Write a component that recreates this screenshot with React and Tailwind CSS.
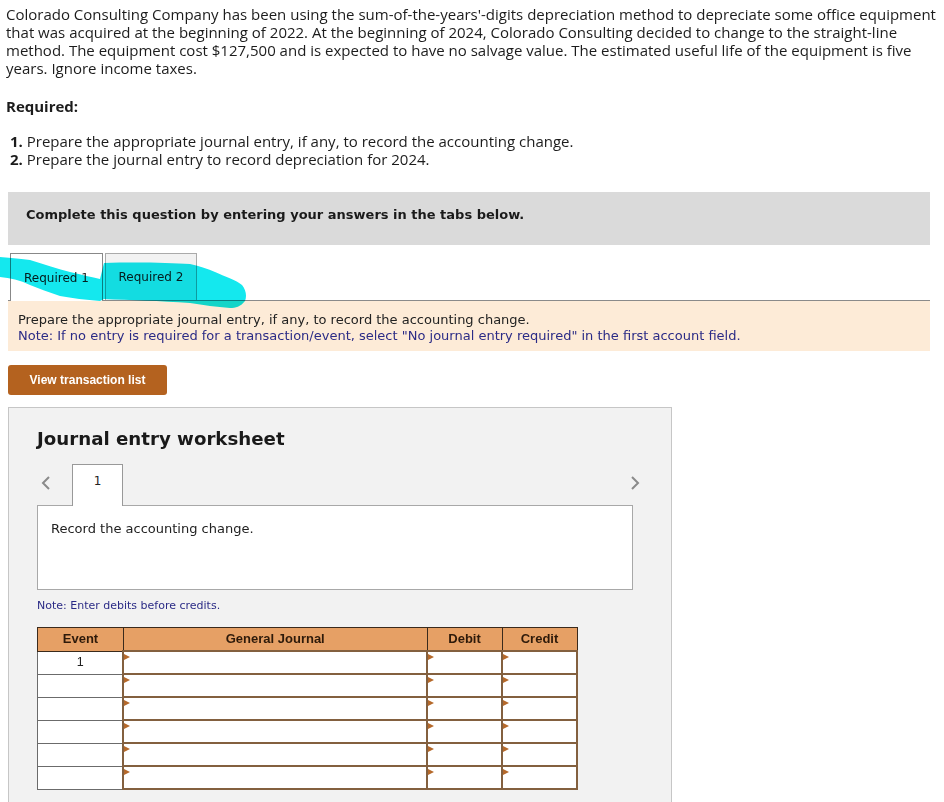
import React from 'react'

const verdana = { fontFamily: '"DejaVu Sans", Verdana, sans-serif' }
const arial = { fontFamily: '"Liberation Sans", Arial, sans-serif' }

const Marker = () => (
  <span className="absolute left-0 top-[2px] h-0 w-0 border-y-[3px] border-l-[6px] border-y-transparent border-l-[#b5692b]" />
)

const rows = [1, 2, 3, 4, 5, 6]

const intro = [
  "Colorado Consulting Company has been using the sum-of-the-years'-digits depreciation method to depreciate some office equipment",
  'that was acquired at the beginning of 2022. At the beginning of 2024, Colorado Consulting decided to change to the straight-line',
  'method. The equipment cost $127,500 and is expected to have no salvage value. The estimated useful life of the equipment is five',
  'years. Ignore income taxes.',
]

const Tabs = () => (
  <div className="relative mt-2 ml-[8px] mr-[14px] flex border-b border-[#8a8a8a] pl-[2px]" style={verdana}>
    <div className="-mb-px flex h-[48px] w-[93px] items-center justify-center border border-b-0 border-[#888] bg-white text-[12px] text-[#222]">
      Required 1
    </div>
    <div className="ml-[2px] flex h-[47px] w-[92px] items-center justify-center border border-b-0 border-[#aaa] bg-[#f2f2f2] text-[12px] text-[#222]">
      Required 2
    </div>
    {/* highlighter stroke across the tabs */}
    <svg className="pointer-events-none absolute left-[-8px] top-[-2px] mix-blend-multiply" width="250" height="60" viewBox="0 0 250 60">
      <path
        d="M0 6 C12 7 22 8 30 9 C44 13 58 18 70 21 C82 24 92 26 100 28 L104 12 C140 11 170 12 190 13 C200 15 208 18 215 21 C226 26 236 29 242 34 C246 39 247 45 245 50 C240 56 236 57 230 57 C216 56 204 54 190 52 C160 50 130 49 104 48 L100 50 C86 49 72 47 60 45 C48 41 38 37 30 34 C20 29 10 27 0 26 Z"
        fill="#14e8ee"
      />
    </svg>
  </div>
)

const JournalTable = () => (
  <table className="mt-[12px] w-[541px] border-collapse text-[13px]" style={arial}>
    <thead>
      <tr className="h-[24px] bg-[#e6a065] font-bold text-[#2e1a0a]">
        <th className="w-[86px] border border-[#3a2a1c] font-bold">Event</th>
        <th className="w-[304px] border border-[#3a2a1c] font-bold">General Journal</th>
        <th className="w-[75px] border border-[#3a2a1c] font-bold">Debit</th>
        <th className="w-[75px] border border-[#3a2a1c] font-bold">Credit</th>
      </tr>
    </thead>
    <tbody>
      {rows.map((r) => (
        <tr key={r} className="h-[23px]">
          <td className="border border-[#6b6b6b] bg-white pt-[1px] text-center align-top text-[12.5px] text-[#222]">
            {r === 1 ? '1' : ''}
          </td>
          {[0, 1, 2].map((c) => (
            <td key={c} className="relative border-2 border-[#83603f] bg-white p-0">
              <Marker />
            </td>
          ))}
        </tr>
      ))}
    </tbody>
  </table>
)

export default function App() {
  return (
    <div className="min-h-[802px] w-[944px] overflow-hidden bg-white pb-10 text-[#1c1c1c]">
      <div className="px-[6px] pt-[5px] text-[15px] leading-[18px]" style={{ fontFamily: '"Open Sans", Lato, sans-serif' }}>
        <p>
          {intro.map((line) => (
            <span key={line} className="block whitespace-nowrap">{line}</span>
          ))}
        </p>
        <p className="mt-[20px] font-bold">Required:</p>
        <ol className="mt-[17px] pl-[4px]">
          <li><span className="font-bold">1.</span> Prepare the appropriate journal entry, if any, to record the accounting change.</li>
          <li><span className="font-bold">2.</span> Prepare the journal entry to record depreciation for 2024.</li>
        </ol>
      </div>

      <div className="mx-[8px] mr-[14px] mt-[24px] flex h-[53px] items-center bg-[#dadada] px-[18px] pb-[8px] text-[13px] font-bold text-[#1a1a1a]" style={verdana}>
        Complete this question by entering your answers in the tabs below.
      </div>

      <Tabs />

      <div className="ml-[8px] mr-[14px] bg-[#fdebd7] px-[10px] pb-[7px] pt-[11px] text-[13px] leading-[16px]" style={verdana}>
        <p className="text-[#222]">Prepare the appropriate journal entry, if any, to record the accounting change.</p>
        <p className="text-[#2b2b86]">Note: If no entry is required for a transaction/event, select "No journal entry required" in the first account field.</p>
      </div>

      <button
        className="ml-[8px] mt-[14px] flex h-[30px] w-[159px] items-center justify-center rounded-[3px] bg-[#b4621f] text-[12px] font-bold text-white"
        style={arial}
      >
        View transaction list
      </button>

      <div className="ml-[8px] mt-[12px] h-[420px] w-[664px] border border-[#c6c6c6] bg-[#f2f2f2] pl-[28px] pt-[19px]" style={verdana}>
        <h2 className="text-[18.2px] font-bold leading-[24px] text-[#1a1a1a]">Journal entry worksheet</h2>

        <div className="mt-[13px] flex w-[604px] items-end">
          <span className="mb-[14px] ml-[3px]">
            <svg width="12" height="16" viewBox="0 0 12 16"><path d="M9 2 L3 8 L9 14" fill="none" stroke="#8a8a8a" strokeWidth="2" /></svg>
          </span>
          <div className="relative z-10 -mb-px ml-[20px] flex h-[42px] w-[51px] justify-center border border-b-0 border-[#999] bg-white pt-[7px] text-[12px] text-[#222]">
            1
          </div>
          <span className="mb-[14px] ml-auto">
            <svg width="12" height="16" viewBox="0 0 12 16"><path d="M3 2 L9 8 L3 14" fill="none" stroke="#8a8a8a" strokeWidth="2" /></svg>
          </span>
        </div>
        <div className="h-[85px] w-[596px] border border-[#a8a8a8] bg-white px-[13px] pt-[13px] text-[13px] text-[#222]">
          Record the accounting change.
        </div>

        <p className="mt-[8px] text-[11px] text-[#2b2b86]">Note: Enter debits before credits.</p>

        <JournalTable />
      </div>
    </div>
  )
}
